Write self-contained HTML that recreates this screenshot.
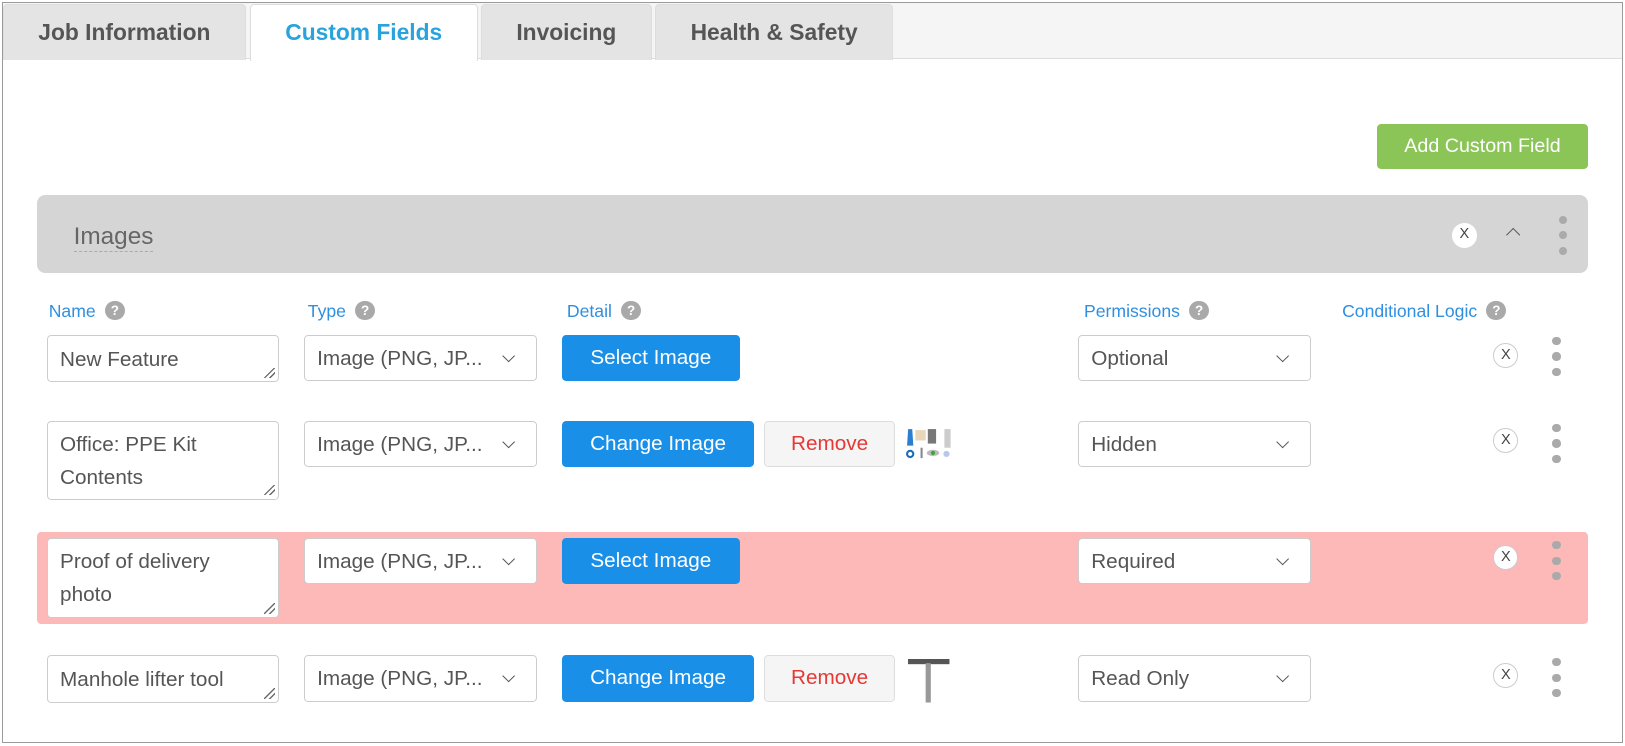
<!DOCTYPE html>
<html><head><meta charset="utf-8"><style>
html,body{margin:0;padding:0;background:#fff;overflow:hidden}
body{width:1625px;height:746px}
#w{zoom:1.03635;position:relative;width:1568px;height:720px;font-family:"Liberation Sans",Arial,sans-serif;color:#555}
.a{position:absolute;box-sizing:border-box}
.frame{left:2px;top:2px;width:1564px;height:715px;border:1px solid #9a9a9a}
.bar{left:3px;top:3px;width:1562px;height:54px;background:#f5f5f5;border-bottom:1px solid #ddd}
.tab{top:4px;height:54px;background:#e4e4e4;border-radius:4px 4px 0 0;font-weight:bold;font-size:22px;line-height:54px;text-align:center;color:#555;border:1px solid #ddd;border-bottom:none}
.tab.on{background:#fff;color:#29a3dc;height:55px}
.btn{border-radius:4px;font-size:20px;text-align:center;color:#fff;background:#1a8fe8}
.inp{background:#fff;border:1px solid #ccc;border-radius:4px;font-size:20px;color:#555;padding-left:12px}
.sel::after{content:"";position:absolute;right:22px;top:50%;width:8px;height:8px;border-right:1.3px solid #555;border-bottom:1.3px solid #555;transform:translateY(-70%) rotate(45deg)}
.rz{position:absolute;right:3px;bottom:3px;width:10px;height:10px;background:linear-gradient(135deg,transparent 45%,#666 46%,#666 54%,transparent 55%,transparent 70%,#666 71%,#666 79%,transparent 80%)}
.lbl{top:290px;font-size:17px;color:#2f8fe0;line-height:20px}
.q{display:inline-block;width:19px;height:19px;border-radius:50%;background:#a9a9a9;color:#fff;font-size:13px;font-weight:bold;text-align:center;line-height:19px;margin-left:9px;vertical-align:top}
.x{width:24px;height:24px;border-radius:50%;background:#fff;border:1px solid #ccc;font-size:14px;text-align:center;line-height:22px;color:#444}
.d{width:8px;height:8px;border-radius:50%;background:#aaa}
.rm{background:#f5f5f5;border:1px solid #ddd;color:#e53935}
</style></head><body><div id="w">
<div class="a frame"></div>
<div class="a bar"></div>
<div class="a tab" style="left:3px;width:234px">Job Information</div>
<div class="a tab on" style="left:241px;width:220px">Custom Fields</div>
<div class="a tab" style="left:464px;width:165px">Invoicing</div>
<div class="a tab" style="left:632px;width:230px">Health &amp; Safety</div>

<div class="a btn" style="left:1329px;top:120px;width:203px;height:43px;line-height:43px;background:#8bc557;font-size:19px">Add Custom Field</div>

<div class="a" style="left:36px;top:188px;width:1496px;height:75px;background:#d5d5d5;border-radius:8px"></div>
<div class="a" style="left:71px;top:215px;font-size:23.5px;color:#666;border-bottom:1px dashed #aaa;line-height:27px">Images</div>
<div class="a x" style="left:1401px;top:215px;border:none">X</div>
<div class="a" style="left:1455px;top:222px;width:10px;height:10px;border-left:1.5px solid #555;border-top:1.5px solid #555;transform:rotate(45deg)"></div>
<div class="a d" style="left:1504px;top:208px"></div><div class="a d" style="left:1504px;top:223px"></div><div class="a d" style="left:1504px;top:238px"></div>

<div class="a lbl" style="left:47px">Name<span class="q">?</span></div>
<div class="a lbl" style="left:297px">Type<span class="q">?</span></div>
<div class="a lbl" style="left:547px">Detail<span class="q">?</span></div>
<div class="a lbl" style="left:1046px">Permissions<span class="q">?</span></div>
<div class="a lbl" style="left:1295px">Conditional Logic<span class="q">?</span></div>

<div class="a" style="left:36px;top:513px;width:1496px;height:89px;background:#fdb8b8;border-radius:4px"></div>

<!-- row1 -->
<div class="a inp" style="left:45px;top:323px;width:224px;height:46px;line-height:46px">New Feature<div class="rz"></div></div>
<div class="a inp sel" style="left:293px;top:323px;width:225px;height:45px;line-height:45px">Image (PNG, JP...</div>
<div class="a btn" style="left:542px;top:323px;width:172px;height:45px;line-height:45px">Select Image</div>
<div class="a inp sel" style="left:1040px;top:323px;width:225px;height:45px;line-height:45px">Optional</div>
<div class="a x" style="left:1441px;top:331px">X</div>
<div class="a d" style="left:1498px;top:325px"></div><div class="a d" style="left:1498px;top:340px"></div><div class="a d" style="left:1498px;top:355px"></div>

<!-- row2 -->
<div class="a inp" style="left:45px;top:406px;width:224px;height:76px;line-height:32px;padding-top:6px">Office: PPE Kit<br>Contents<div class="rz"></div></div>
<div class="a inp sel" style="left:293px;top:406px;width:225px;height:45px;line-height:45px">Image (PNG, JP...</div>
<div class="a btn" style="left:542px;top:406px;width:186px;height:45px;line-height:45px">Change Image</div>
<div class="a btn rm" style="left:737px;top:406px;width:127px;height:45px;line-height:43px">Remove</div>
<svg class="a" style="left:873px;top:412px" width="50" height="32" viewBox="0 0 50 32">
<path d="M3 2 L7 2 L8 18 L2 18Z" fill="#2a7fd0"/><rect x="10" y="3" width="10" height="10" fill="#e8d7b8"/><rect x="22" y="2" width="8" height="14" fill="#777"/><rect x="38" y="2" width="6" height="18" fill="#ccc"/>
<circle cx="5" cy="26" r="3" fill="none" stroke="#1a6db8" stroke-width="2"/><path d="M16 20 L16 30" stroke="#888" stroke-width="2"/><ellipse cx="27" cy="25" rx="6" ry="3" fill="#bbb"/><circle cx="27" cy="25" r="2" fill="#3a3"/><circle cx="40" cy="26" r="3" fill="#b8c8e8"/></svg>
<div class="a inp sel" style="left:1040px;top:406px;width:225px;height:45px;line-height:45px">Hidden</div>
<div class="a x" style="left:1441px;top:413px">X</div>
<div class="a d" style="left:1498px;top:409px"></div><div class="a d" style="left:1498px;top:424px"></div><div class="a d" style="left:1498px;top:439px"></div>

<!-- row3 -->
<div class="a inp" style="left:45px;top:519px;width:224px;height:77px;line-height:32px;padding-top:6px">Proof of delivery<br>photo<div class="rz"></div></div>
<div class="a inp sel" style="left:293px;top:519px;width:225px;height:45px;line-height:45px">Image (PNG, JP...</div>
<div class="a btn" style="left:542px;top:519px;width:172px;height:45px;line-height:45px">Select Image</div>
<div class="a inp sel" style="left:1040px;top:519px;width:225px;height:45px;line-height:45px">Required</div>
<div class="a x" style="left:1441px;top:526px">X</div>
<div class="a d" style="left:1498px;top:522px"></div><div class="a d" style="left:1498px;top:537px"></div><div class="a d" style="left:1498px;top:552px"></div>

<!-- row4 -->
<div class="a inp" style="left:45px;top:632px;width:224px;height:46px;line-height:46px">Manhole lifter tool<div class="rz"></div></div>
<div class="a inp sel" style="left:293px;top:632px;width:225px;height:45px;line-height:45px">Image (PNG, JP...</div>
<div class="a btn" style="left:542px;top:632px;width:186px;height:45px;line-height:45px">Change Image</div>
<div class="a btn rm" style="left:737px;top:632px;width:127px;height:45px;line-height:43px">Remove</div>
<svg class="a" style="left:875px;top:636px" width="42" height="42" viewBox="0 0 42 42"><rect x="1" y="0" width="40" height="5" fill="#555"/><rect x="18" y="4" width="5" height="38" fill="#999"/></svg>
<div class="a inp sel" style="left:1040px;top:632px;width:225px;height:45px;line-height:45px">Read Only</div>
<div class="a x" style="left:1441px;top:640px">X</div>
<div class="a d" style="left:1498px;top:635px"></div><div class="a d" style="left:1498px;top:650px"></div><div class="a d" style="left:1498px;top:665px"></div>
</div></body></html>
